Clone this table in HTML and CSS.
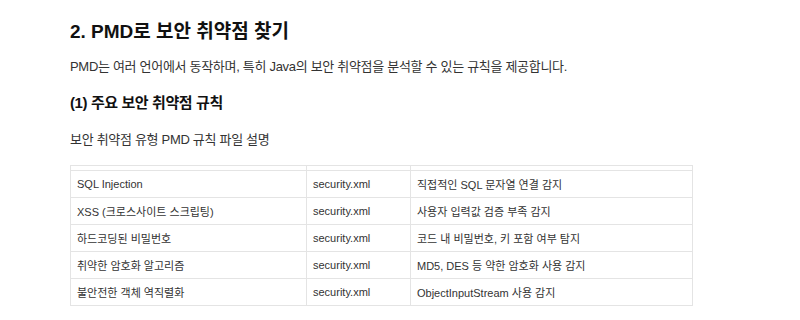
FILE: index.html
```html
<!DOCTYPE html>
<html lang="ko">
<head>
<meta charset="utf-8">
<link rel="stylesheet" href="styles.css">
</head>
<body>
<main class="post">
  <h2 class="title">2. PMD로 보안 취약점 찾기</h2>
  <p class="text">PMD는 여러 언어에서 동작하며, 특히 Java의 보안 취약점을 분석할 수 있는 규칙을 제공합니다.</p>
  <h3 class="subtitle">(1) 주요 보안 취약점 규칙</h3>
  <p class="text caption">보안 취약점 유형 PMD 규칙 파일 설명</p>
  <table class="rules">
    <colgroup>
      <col class="c1"><col class="c2"><col class="c3">
    </colgroup>
    <thead>
      <tr class="head"><th></th><th></th><th></th></tr>
    </thead>
    <tbody>
      <tr><td>SQL Injection</td><td>security.xml</td><td>직접적인 SQL 문자열 연결 감지</td></tr>
      <tr><td>XSS (크로스사이트 스크립팅)</td><td>security.xml</td><td>사용자 입력값 검증 부족 감지</td></tr>
      <tr><td>하드코딩된 비밀번호</td><td>security.xml</td><td>코드 내 비밀번호, 키 포함 여부 탐지</td></tr>
      <tr><td>취약한 암호화 알고리즘</td><td>security.xml</td><td>MD5, DES 등 약한 암호화 사용 감지</td></tr>
      <tr><td>불안전한 객체 역직렬화</td><td>security.xml</td><td>ObjectInputStream 사용 감지</td></tr>
    </tbody>
  </table>
</main>
</body>
</html>
```
FILE: styles.css
```css
html, body {
  margin: 0;
  padding: 0;
  background: #ffffff;
}
body {
  font-family: "Liberation Sans", Arial, "Noto Sans CJK KR", sans-serif;
  color: #333333;
}
.post {
  width: 623px;
  padding: 18px 0 0 70px;
}
.title {
  margin: 0;
  font-size: 19px;
  line-height: 28px;
  font-weight: bold;
  color: #111111;
}
.text {
  margin: 0;
  font-size: 13px;
  line-height: 20px;
  letter-spacing: -0.3px;
}
.title + .text {
  margin-top: 11px;
}
.subtitle {
  margin: 14px 0 0;
  font-size: 15px;
  line-height: 24px;
  font-weight: bold;
  letter-spacing: -0.4px;
  color: #111111;
}
.caption {
  margin-top: 15px;
}
.rules {
  margin-top: 15px;
  width: 623px;
  border-collapse: collapse;
  font-size: 11px;
  color: #333333;
}
.c1 { width: 236px; }
.c2 { width: 104px; }
.rules th, .rules td {
  border: 1px solid #e4e4e4;
  text-align: left;
  padding: 0 6px;
}
.rules .head th {
  height: 4px;
  padding: 0;
}
.rules td {
  height: 26px;
}
```
